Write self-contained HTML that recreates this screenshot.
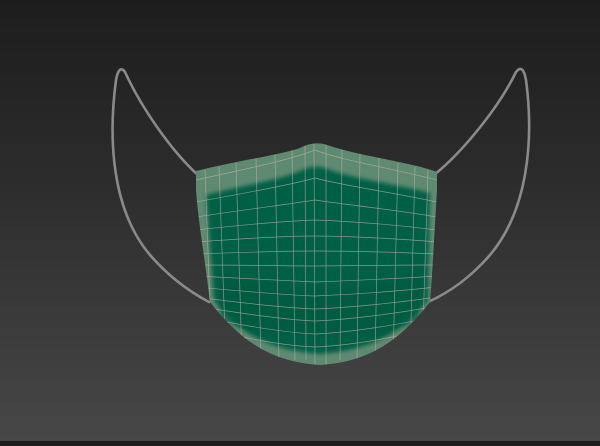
<!DOCTYPE html>
<html><head><style>
html,body{margin:0;padding:0}
body{width:600px;height:441px;overflow:hidden;background:linear-gradient(#1d1d1d,#2c2c2c 40%,#474747)}
</style></head><body>
<svg width="600" height="441" viewBox="0 0 600 441" xmlns="http://www.w3.org/2000/svg">
<defs>
<clipPath id="m"><path d="M196 171 C240 160 280 155 300 148 Q315 140 330 146 C360 156 410 162 437 172 L437 190 C434 240 432 280 430 302 C400 340 370 362 320 365 C270 362 240 340 210 302 C205 260 198 220 196 190 Z"/></clipPath>
<filter id="b"><feGaussianBlur stdDeviation="2"/></filter>
</defs>
<g fill="none" stroke="#8a8a8a" stroke-width="2.6" stroke-linecap="round">
<path d="M199 176 C170 150 140 105 125 72 Q119 64 116 80 C108 140 112 210 150 255 C170 278 190 292 209 302"/>
<path d="M434 175 C465 150 500 105 516 72 Q523 63 526 80 C534 140 528 210 490 255 C470 278 450 292 428 302"/>
</g>
<g clip-path="url(#m)">
<rect x="190" y="135" width="255" height="235" fill="#5f8a72"/>
<path d="M206 195 C240 186 280 180 300 171 Q315 163 330 170 C360 180 400 185 430 193 L428 300 C400 335 370 350 320 354 C270 350 240 335 214 300 Z" fill="#006045" filter="url(#b)"/>
<path d="M220 270 C280 295 360 295 420 270 L420 320 C380 340 260 340 220 320Z" fill="#005a40" opacity=".6" filter="url(#b)"/>
<g stroke="#c4b0b0" stroke-width="0.7" fill="none" opacity=".7">
<path d="M196 180 C250 168 290 160 315 150 C340 160 390 168 437 180"/>
<path d="M196 202 C250 192 290 185 315 178 C340 185 390 192 437 202"/>
<path d="M196 217 C250 209 290 204 315 200 C340 204 390 209 437 217"/>
<path d="M196 230 C250 224 290 221 315 220 C340 221 390 224 437 230"/>
<path d="M196 242 C250 238 290 236 315 236 C340 236 390 238 437 242"/>
<path d="M196 254 C250 252 290 251 315 251 C340 251 390 252 437 254"/>
<path d="M196 265 C250 265 290 266 315 266 C340 266 390 265 437 265"/>
<path d="M196 276 C250 279 290 281 315 282 C340 281 390 279 437 276"/>
<path d="M196 287 C250 292 290 295 315 296 C340 295 390 292 437 287"/>
<path d="M196 297 C250 304 290 308 315 309 C340 308 390 304 437 297"/>
<path d="M196 306 C250 315 290 320 315 321 C340 320 390 315 437 306"/>
<path d="M196 316 C250 327 290 333 315 334 C340 333 390 327 437 316"/>
<path d="M196 326 C250 340 290 346 315 347 C340 346 390 340 437 326"/>
<path d="M205 170 L212 360"/><path d="M219 167 L226 360"/>
<path d="M236 163 L242 360"/><path d="M256 158 L261 360"/><path d="M275 153 L279 360"/>
<path d="M292 149 L295 360"/><path d="M305 145 L306 360"/><path d="M314 142 L315 370"/>
<path d="M326 144 L326 370"/><path d="M342 148 L340 360"/><path d="M360 153 L357 360"/>
<path d="M379 158 L375 360"/><path d="M398 163 L393 360"/>
<path d="M415 167 L410 360"/><path d="M428 170 L422 360"/>
</g>
</g>
</svg>
</body></html>
